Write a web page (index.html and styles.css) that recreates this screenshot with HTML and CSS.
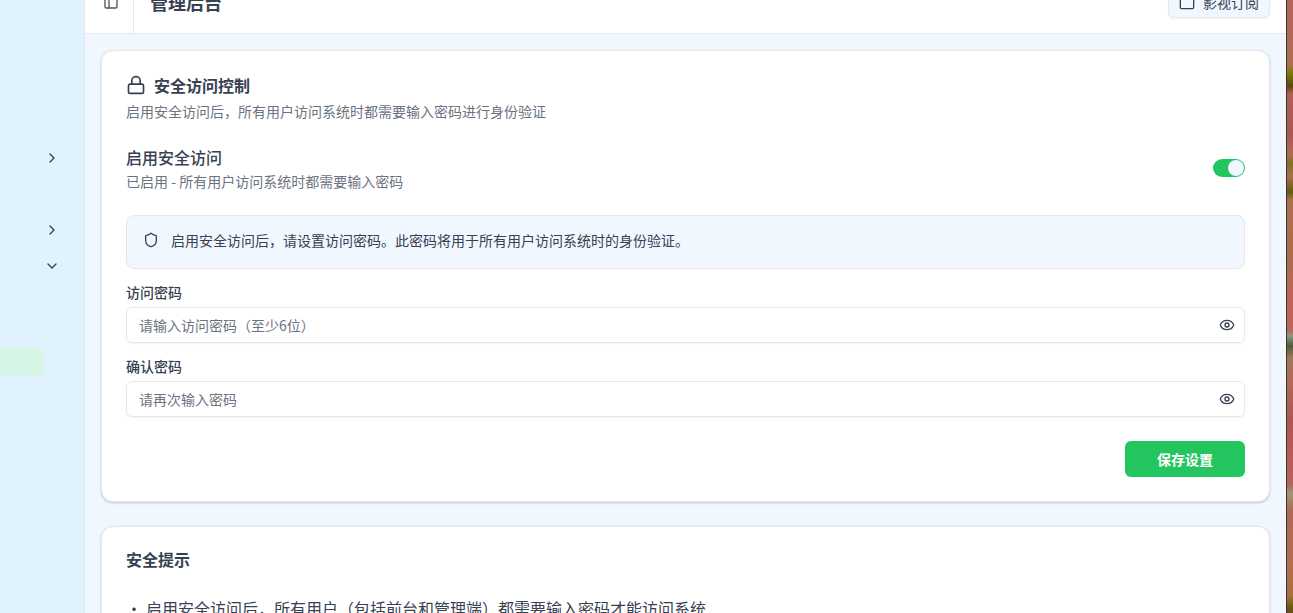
FILE: index.html
```html
<!DOCTYPE html>
<html lang="zh-CN">

<head>
    <meta charset="UTF-8">
    <title>管理后台</title>
    <link rel="stylesheet" href="styles.css">
</head>

<body>
    <div class="page">
        <!-- Sidebar -->
        <nav class="sidebar">
            <button type="button" class="nav-item">
                <svg class="icon" viewBox="0 0 24 24"><path d="m9 18 6-6-6-6"/></svg>
            </button>
            <div class="nav-item"></div>
            <button type="button" class="nav-item">
                <svg class="icon" viewBox="0 0 24 24"><path d="m9 18 6-6-6-6"/></svg>
            </button>
            <button type="button" class="nav-item">
                <svg class="icon" viewBox="0 0 24 24"><path d="m6 9 6 6 6-6"/></svg>
            </button>
            <div class="sub-menu">
                <a href="#" class="sub-item"></a>
                <a href="#" class="sub-item"></a>
                <a href="#" class="sub-item active"></a>
            </div>
        </nav>

        <div class="content">
            <!-- Header -->
            <header class="header">
                <button type="button" class="toggle-btn">
                    <svg class="icon" viewBox="0 0 24 24"><rect x="3" y="3" width="18" height="18" rx="2"/><path d="M9 3v18"/></svg>
                </button>
                <h1 class="header-title">管理后台</h1>
                <button type="button" class="subscribe-btn">
                    <svg class="icon" viewBox="0 0 24 24"><rect x="2" y="7" width="20" height="15" rx="2"/><path d="m17 2-5 5-5-5"/></svg>
                    影视订阅
                </button>
            </header>

            <main class="main">
                <section class="card">
                    <h2 class="card-title">
                        <svg class="icon icon-lg" viewBox="0 0 24 24"><rect x="3" y="11" width="18" height="11" rx="2"/><path d="M7 11V7a5 5 0 0 1 10 0v4"/></svg>
                        安全访问控制
                    </h2>
                    <p class="card-desc">启用安全访问后，所有用户访问系统时都需要输入密码进行身份验证</p>

                    <div class="switch-row">
                        <div>
                            <label class="switch-label" for="enabled">启用安全访问</label>
                            <p class="switch-desc">已启用 - 所有用户访问系统时都需要输入密码</p>
                        </div>
                        <input type="checkbox" role="switch" class="switch" id="enabled" checked>
                    </div>

                    <div class="alert">
                        <svg class="icon" viewBox="0 0 24 24"><path d="M20 13c0 5-3.500 7.500-7.660 8.950a1 1 0 0 1-.67-.01C7.500 20.500 4 18 4 13V6a1 1 0 0 1 1-1c2 0 4.500-1.200 6.240-2.720a1.170 1.170 0 0 1 1.520 0C14.510 3.810 17 5 19 5a1 1 0 0 1 1 1z"/></svg>
                        <p>启用安全访问后，请设置访问密码。此密码将用于所有用户访问系统时的身份验证。</p>
                    </div>

                    <form class="password-form" id="passwordForm">
                        <div class="field">
                            <label for="password">访问密码</label>
                            <div class="input-box">
                                <input type="password" id="password" placeholder="请输入访问密码（至少6位）">
                                <button type="button" class="eye-btn" aria-label="显示密码">
                                    <svg class="icon" viewBox="0 0 24 24"><path d="M2.060 12.350a1 1 0 0 1 0-.7 10.750 10.750 0 0 1 19.880 0 1 1 0 0 1 0 .7 10.750 10.750 0 0 1-19.880 0"/><circle cx="12" cy="12" r="3"/></svg>
                                </button>
                            </div>
                        </div>
                        <div class="field">
                            <label for="confirmPassword">确认密码</label>
                            <div class="input-box">
                                <input type="password" id="confirmPassword" placeholder="请再次输入密码">
                                <button type="button" class="eye-btn" aria-label="显示密码">
                                    <svg class="icon" viewBox="0 0 24 24"><path d="M2.060 12.350a1 1 0 0 1 0-.7 10.750 10.750 0 0 1 19.880 0 1 1 0 0 1 0 .7 10.750 10.750 0 0 1-19.880 0"/><circle cx="12" cy="12" r="3"/></svg>
                                </button>
                            </div>
                        </div>
                        <button type="submit" class="save-btn">保存设置</button>
                    </form>
                </section>

                <section class="card">
                    <h2 class="card-title">安全提示</h2>
                    <ul class="tips">
                        <li>启用安全访问后，所有用户（包括前台和管理端）都需要输入密码才能访问系统</li>
                    </ul>
                </section>
            </main>
        </div>

        <!-- Desktop wallpaper -->
        <div class="wallpaper"></div>
    </div>
</body>

</html>
```
FILE: styles.css
```css
* {
    box-sizing: border-box;
}

body {
    margin: 0;
    height: 100vh;
    overflow: hidden;
    font-family: "Noto Sans CJK SC", sans-serif;
    font-size: 14px;
    line-height: 20px;
    color: #374151;
    background-color: #f0f7ff;
}

h1,
h2,
p,
ul {
    margin: 0;
    padding: 0;
}

button,
input {
    font-family: inherit;
    font-size: 14px;
    color: inherit;
}

button {
    padding: 0;
    border: none;
    background: none;
    cursor: pointer;
}

.icon {
    width: 16px;
    height: 16px;
    flex-shrink: 0;
    fill: none;
    stroke: currentColor;
    stroke-width: 2;
    stroke-linecap: round;
    stroke-linejoin: round;
}

.icon-lg {
    width: 20px;
    height: 20px;
}

/* The top of the page is scrolled out of view */
.page {
    display: flex;
    margin-top: -30px;
    height: calc(100vh + 30px);
}

/* Sidebar */
.sidebar {
    flex: 0 0 85px;
    display: flex;
    flex-direction: column;
    gap: 4px;
    padding-top: 172px;
    background-color: #e0f2fe;
    border-right: 1px solid #e5e7eb;
}

.nav-item {
    display: flex;
    align-items: center;
    justify-content: flex-end;
    height: 32px;
    padding-right: 24px;
}

.sub-menu {
    display: flex;
    flex-direction: column;
    gap: 3px;
    padding-right: 40px;
}

.sub-item {
    height: 28px;
    border-radius: 0 6px 6px 0;
}

.sub-item.active {
    background-color: #d7f5e6;
}

.content {
    flex: 1;
    min-width: 0;
    overflow: hidden;
}

/* Header */
.header {
    display: flex;
    align-items: center;
    height: 64px;
    padding-right: 16px;
    background-color: #ffffff;
    border-bottom: 1px solid #e5e7eb;
}

.toggle-btn {
    display: flex;
    align-items: center;
    align-self: stretch;
    padding: 0 14px 0 18px;
    color: #4b5563;
    border-right: 1px solid #e5e7eb;
}

.header-title {
    flex: 1;
    padding-left: 16px;
    font-size: 18px;
    line-height: 28px;
    font-weight: 600;
}

.subscribe-btn {
    display: flex;
    align-items: center;
    gap: 8px;
    height: 32px;
    padding: 0 10px;
    background-color: #f0f7ff;
    border: 1px solid #e5e7eb;
    border-radius: 6px;
    box-shadow: 0 1px 2px rgba(0, 0, 0, 0.05);
}

/* Cards */
.main {
    display: flex;
    flex-direction: column;
    gap: 24px;
    padding: 16px;
}

.card {
    padding: 24px;
    background-color: #ffffff;
    border: 1px solid #e5e7eb;
    border-radius: 12px;
    box-shadow: 0 1px 3px rgba(0, 0, 0, 0.1), 0 1px 2px rgba(0, 0, 0, 0.1);
}

.card-title {
    display: flex;
    align-items: center;
    gap: 8px;
    font-size: 16px;
    line-height: 16px;
    font-weight: 600;
}

.card-desc {
    margin-top: 6px;
    color: #6b7280;
}

.switch-row {
    display: flex;
    align-items: center;
    justify-content: space-between;
    margin: 24px 0;
}

.switch-label {
    display: block;
    font-size: 16px;
    line-height: 24px;
    font-weight: 500;
}

.switch-desc {
    margin-top: 2px;
    color: #6b7280;
}

.switch {
    appearance: none;
    display: flex;
    align-items: center;
    width: 32px;
    height: 18px;
    margin: 0;
    padding: 1px;
    border-radius: 9px;
    background-color: #d1d5db;
    cursor: pointer;
}

.switch::before {
    content: "";
    width: 16px;
    height: 16px;
    border-radius: 50%;
    background-color: #f0f7ff;
}

.switch:checked {
    justify-content: flex-end;
    background-color: #22c55e;
}

.alert {
    display: flex;
    align-items: center;
    gap: 12px;
    padding: 14px 16px 18px;
    line-height: 20px;
    background-color: #f0f7ff;
    border: 1px solid #e5e7eb;
    border-radius: 8px;
}

/* Password form */
.password-form {
    display: flex;
    flex-direction: column;
    gap: 16px;
    margin-top: 16px;
}

.field {
    display: flex;
    flex-direction: column;
    gap: 8px;
}

.field label {
    line-height: 14px;
    font-weight: 500;
}

.input-box {
    display: flex;
    height: 36px;
    border: 1px solid #e5e7eb;
    border-radius: 6px;
    box-shadow: 0 1px 2px rgba(0, 0, 0, 0.05);
}

.input-box input {
    flex: 1;
    min-width: 0;
    padding: 0 12px;
    border: none;
    outline: none;
    background: none;
}

.input-box input::placeholder {
    color: #6b7280;
}

.eye-btn {
    display: flex;
    align-items: center;
    padding: 0 9px;
}

.save-btn {
    align-self: flex-end;
    height: 36px;
    margin-top: 8px;
    padding: 0 32px;
    font-weight: 600;
    color: #ffffff;
    background-color: #22c55e;
    border-radius: 6px;
}

.tips {
    margin-top: 28px;
    list-style: none;
    font-size: 16px;
    line-height: 26px;
}

.tips li {
    display: flex;
    gap: 8px;
}

.tips li::before {
    content: "•";
    width: 12px;
    text-align: right;
}

.wallpaper {
    flex: 0 0 7px;
    border-left: 1px solid #40342f;
    background: linear-gradient(
        #b06a5c 30px,
        #b0695a 60px,
        #ab7050 95px,
        #7d7a10 103px,
        #5a4a10 116px,
        #b06058 124px,
        #a85a52 165px,
        #ab7050 185px,
        #7d7424 193px,
        #ab7050 206px,
        #625c14 222px,
        #ab7050 230px,
        #a8704c 290px,
        #c06458 330px,
        #b8685a 360px,
        #8c9880 366px,
        #4e5a3c 376px,
        #a07858 388px,
        #ad6e58 410px,
        #a85a52 450px,
        #b85a58 480px,
        #b0685a 515px,
        #a09878 523px,
        #ad6a54 540px,
        #b07050 600px,
        #a87040 626px,
        #6a6010 636px,
        #6a4c20 643px
    );
}
```
